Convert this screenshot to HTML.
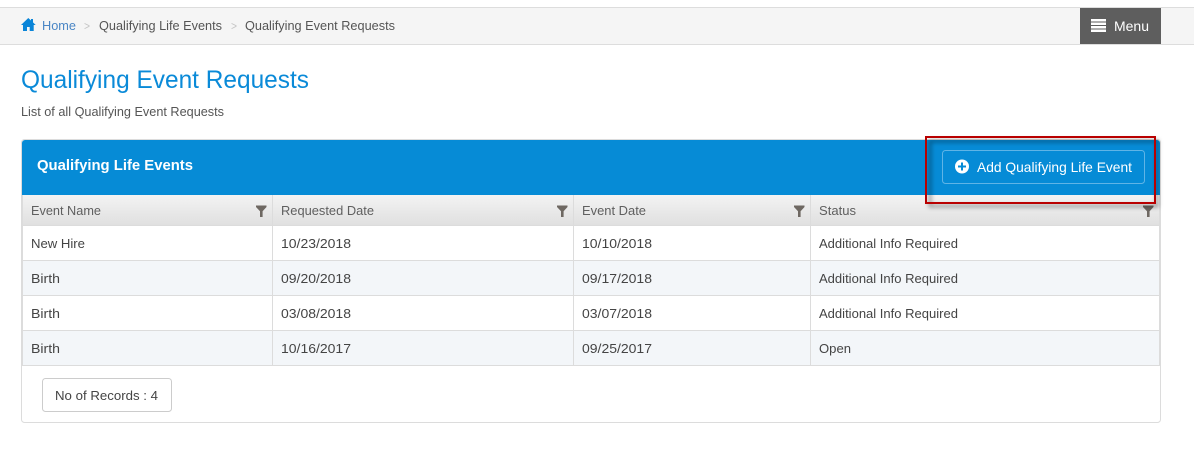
<!DOCTYPE html>
<html lang="en">
<head>
<meta charset="utf-8">
<title>Qualifying Event Requests</title>
<style>
html,body{margin:0;padding:0;background:#fff;width:1194px;height:463px;overflow:hidden}
svg{display:block}
text{font-family:"Liberation Sans",sans-serif;font-size:13px;fill:#555}
.h{fill:#5f5f5f;font-size:13px}
.c{fill:#444;font-size:13px}
.w{fill:#fff}
</style>
</head>
<body>
<svg width="1194" height="463" viewBox="0 0 1194 463" xmlns="http://www.w3.org/2000/svg">
<defs>
<linearGradient id="hd" x1="0" y1="0" x2="0" y2="1"><stop offset="0" stop-color="#f3f3f3"/><stop offset="1" stop-color="#e0e0e0"/></linearGradient>
<filter id="sh" x="-20%" y="-30%" width="140%" height="160%"><feGaussianBlur stdDeviation="2.200"/></filter>
<path id="f" d="M0 0H10.500V1.500L6.600 5.800V11.500H4V5.800L0 1.500Z" fill="#6e6862"/>
</defs>

<!-- top bar -->
<rect x="0" y="7" width="1194" height="38" fill="#f5f5f5"/>
<rect x="0" y="7" width="1194" height="1" fill="#ddd"/>
<rect x="0" y="44" width="1194" height="1" fill="#ddd"/>
<path d="M28.300 18L21 25H23V31H27V27H29.700V31H33.700V25H35.700L33 22.400V19H31V20.500Z" fill="#0a85d8"/>
<text x="42" y="30" textLength="34" lengthAdjust="spacingAndGlyphs" style="fill:#4a86c5">Home</text>
<text x="84" y="30" textLength="6" lengthAdjust="spacingAndGlyphs" style="fill:#c4c4c4;font-size:12px">&gt;</text>
<text x="99" y="30" textLength="123" lengthAdjust="spacingAndGlyphs">Qualifying Life Events</text>
<text x="231" y="30" textLength="6" lengthAdjust="spacingAndGlyphs" style="fill:#c4c4c4;font-size:12px">&gt;</text>
<text x="245" y="30" textLength="150" lengthAdjust="spacingAndGlyphs">Qualifying Event Requests</text>
<rect x="1080" y="8" width="81" height="36" fill="#5e5e5e"/>
<path d="M1091 19H1106V21.500H1091ZM1091 22.500H1106V25H1091ZM1091 26H1106V28.500H1091ZM1091 29.500H1106V32H1091Z" fill="#fff"/>
<text class="w" x="1114" y="31" textLength="35" lengthAdjust="spacingAndGlyphs" style="font-size:14px;fill:#fff">Menu</text>

<!-- heading -->
<text x="21" y="88" textLength="288" lengthAdjust="spacingAndGlyphs" style="font-size:25px;fill:#0a8ad8">Qualifying Event Requests</text>
<text x="21" y="116" textLength="203" lengthAdjust="spacingAndGlyphs">List of all Qualifying Event Requests</text>

<!-- panel -->
<rect x="21.500" y="139.500" width="1139" height="283" rx="3" fill="#fff" stroke="#dcdcdc"/>
<path d="M22 143a3 3 0 0 1 3-3H1157a3 3 0 0 1 3 3V195H22Z" fill="#068bd6"/>
<text class="w" x="37" y="170" textLength="156" lengthAdjust="spacingAndGlyphs" style="font-size:15px;font-weight:bold;fill:#fff">Qualifying Life Events</text>

<!-- table header -->
<rect x="22" y="195" width="1138" height="30" fill="url(#hd)"/>
<rect x="22" y="225" width="1138" height="1" fill="#dcdcdc"/>

<!-- rows -->
<rect x="22" y="261" width="1138" height="34" fill="#f3f6f9"/>
<rect x="22" y="331" width="1138" height="34" fill="#f3f6f9"/>
<rect x="22" y="260" width="1138" height="1" fill="#dcdcdc"/>
<rect x="22" y="295" width="1138" height="1" fill="#dcdcdc"/>
<rect x="22" y="330" width="1138" height="1" fill="#dcdcdc"/>
<rect x="22" y="365" width="1138" height="1" fill="#dcdcdc"/>
<rect x="22" y="195" width="1" height="170" fill="#dcdcdc"/>
<rect x="272" y="195" width="1" height="170" fill="#dcdcdc"/>
<rect x="573" y="195" width="1" height="170" fill="#dcdcdc"/>
<rect x="810" y="195" width="1" height="170" fill="#dcdcdc"/>
<rect x="1159" y="195" width="1" height="170" fill="#dcdcdc"/>

<text class="h" x="31" y="215" textLength="70" lengthAdjust="spacingAndGlyphs">Event Name</text>
<text class="h" x="281" y="215" textLength="93" lengthAdjust="spacingAndGlyphs">Requested Date</text>
<text class="h" x="582" y="215" textLength="64" lengthAdjust="spacingAndGlyphs">Event Date</text>
<text class="h" x="819" y="215" textLength="37" lengthAdjust="spacingAndGlyphs">Status</text>
<use href="#f" x="256" y="205.500"/>
<use href="#f" x="557" y="205.500"/>
<use href="#f" x="794" y="205.500"/>
<use href="#f" x="1143" y="205.500"/>

<text class="c" x="31" y="248" textLength="54" lengthAdjust="spacingAndGlyphs">New Hire</text>
<text class="c" x="281" y="248" textLength="70" lengthAdjust="spacingAndGlyphs">10/23/2018</text>
<text class="c" x="582" y="248" textLength="70" lengthAdjust="spacingAndGlyphs">10/10/2018</text>
<text class="c" x="819" y="248" textLength="139" lengthAdjust="spacingAndGlyphs">Additional Info Required</text>

<text class="c" x="31" y="283" textLength="29" lengthAdjust="spacingAndGlyphs">Birth</text>
<text class="c" x="281" y="283" textLength="70" lengthAdjust="spacingAndGlyphs">09/20/2018</text>
<text class="c" x="582" y="283" textLength="70" lengthAdjust="spacingAndGlyphs">09/17/2018</text>
<text class="c" x="819" y="283" textLength="139" lengthAdjust="spacingAndGlyphs">Additional Info Required</text>

<text class="c" x="31" y="318" textLength="29" lengthAdjust="spacingAndGlyphs">Birth</text>
<text class="c" x="281" y="318" textLength="70" lengthAdjust="spacingAndGlyphs">03/08/2018</text>
<text class="c" x="582" y="318" textLength="70" lengthAdjust="spacingAndGlyphs">03/07/2018</text>
<text class="c" x="819" y="318" textLength="139" lengthAdjust="spacingAndGlyphs">Additional Info Required</text>

<text class="c" x="31" y="353" textLength="29" lengthAdjust="spacingAndGlyphs">Birth</text>
<text class="c" x="281" y="353" textLength="70" lengthAdjust="spacingAndGlyphs">10/16/2017</text>
<text class="c" x="582" y="353" textLength="70" lengthAdjust="spacingAndGlyphs">09/25/2017</text>
<text class="c" x="819" y="353" textLength="32" lengthAdjust="spacingAndGlyphs">Open</text>

<!-- records -->
<rect x="42.500" y="378.500" width="129" height="33" rx="3" fill="#fff" stroke="#ccc"/>
<text class="c" x="55" y="400" textLength="103" lengthAdjust="spacingAndGlyphs">No of Records : 4</text>

<!-- add button -->
<rect x="942.500" y="150.500" width="202" height="33" rx="3" fill="none" stroke="#5fb4e6"/>
<circle cx="962" cy="166.500" r="7" fill="#fff"/>
<path d="M958 165.500H961V162.500H963V165.500H966V167.500H963V170.500H961V167.500H958Z" fill="#068bd6"/>
<text class="w" x="977" y="172" textLength="155" lengthAdjust="spacingAndGlyphs" style="font-size:14px;fill:#fff">Add Qualifying Life Event</text>

<!-- red callout with shadow -->
<rect x="930" y="141" width="227" height="65" fill="none" stroke="#000" stroke-opacity=".36" stroke-width="3" filter="url(#sh)"/>
<rect x="926" y="137" width="229" height="66" fill="none" stroke="#b90000" stroke-width="2"/>
</svg>
</body>
</html>
